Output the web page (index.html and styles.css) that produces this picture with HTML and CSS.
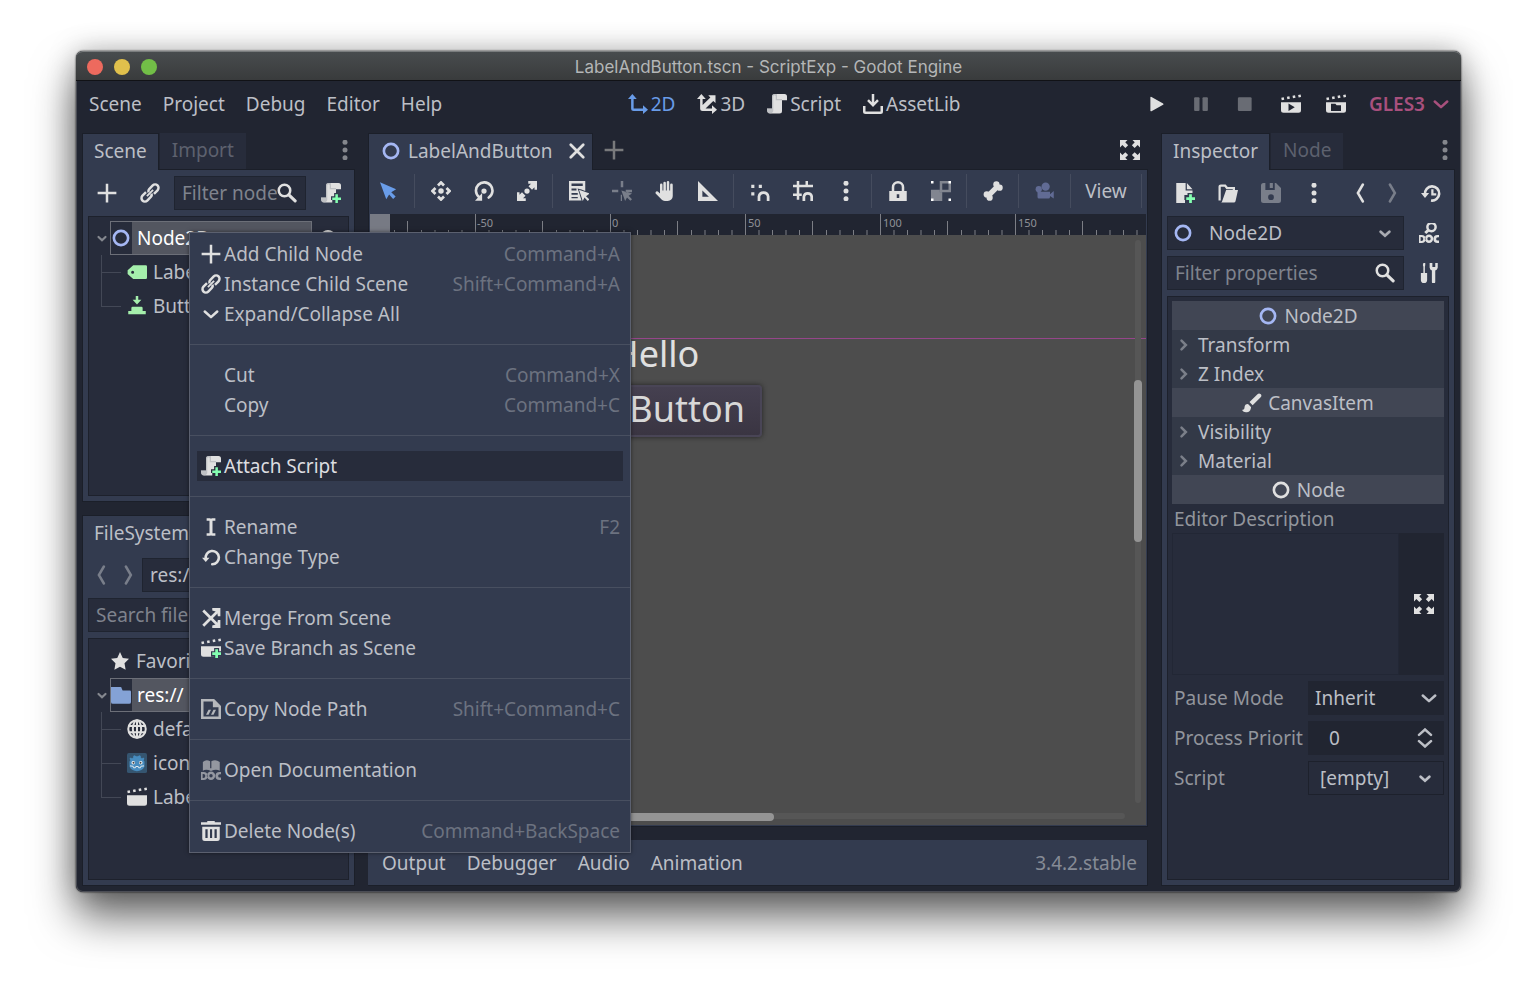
FILE: index.html
```html
<!DOCTYPE html>
<html lang="en">
<head>
    <meta charset="UTF-8">
    <meta name="viewport" content="width=device-width, initial-scale=1.0">
    <title>LabelAndButton.tscn - ScriptExp - Godot Engine</title>
    <link rel="stylesheet" href="styles.css">
</head>
<body>
    <!-- icon set, 16x16 grid -->
    <svg class="sprite" aria-hidden="true">
        <symbol id="i-add" viewBox="0 0 16 16"><path d="M7 .5V7H.5v2H7v6.500h2V9h6.500V7H9V.5z"/></symbol>
        <symbol id="i-link" viewBox="0 0 16 16"><g transform="rotate(-45 8 8)" fill="none" stroke="currentColor" stroke-width="2"><path d="M8.500 9.300a2.700 2.700 0 0 1-2.300 1.400H2.200a2.700 2.700 0 0 1 0-5.400h4"/><path d="M7.500 6.700a2.700 2.700 0 0 1 2.300-1.400h4a2.700 2.700 0 0 1 0 5.400h-4"/><path d="M4.500 8h7" stroke-width="1.500"/></g></symbol>
        <symbol id="i-search" viewBox="0 0 16 16"><g fill="none" stroke="currentColor"><circle cx="6" cy="6" r="4.600" stroke-width="2"/><path d="M9.500 9.500l5 4.800" stroke-width="2.500" stroke-linecap="round"/></g></symbol>
        <symbol id="i-script" viewBox="0 0 16 16"><path d="M6 0a2 2 0 0 0-2 2v9.500H0V13a2.500 2.500 0 0 0 2.500 2.500H10a2 2 0 0 0 2-2V5h4V2a2 2 0 0 0-2-2z"/><path d="M6 0a2 2 0 0 0-2 2v9.500H0V13a2.500 2.500 0 0 0 5 0V2a1 1 0 0 1 2 0v3h5V4H8V0z" fill="#a9abb0" opacity=".6"/></symbol>
        <symbol id="i-script-new" viewBox="0 0 16 16"><path d="M6 0a2 2 0 0 0-2 2v9.500H0V13a2.500 2.500 0 0 0 2.500 2.500H9V13.500H8v-3h2.500V8H12V5h4V2a2 2 0 0 0-2-2z"/><path d="M6 0a2 2 0 0 0-2 2v9.500H0V13a2.500 2.500 0 0 0 5 0V2a1 1 0 0 1 2 0v3h5V4H8V0z" fill="#a9abb0" opacity=".6"/><path fill="#84ffb1" d="M11.500 9h2v2.500H16v2h-2.500V16h-2v-2.500H9v-2h2.500z"/></symbol>
        <symbol id="i-dots" viewBox="0 0 16 16"><circle cx="8" cy="1.800" r="2"/><circle cx="8" cy="8" r="2"/><circle cx="8" cy="14.200" r="2"/></symbol>
        <symbol id="i-node" viewBox="0 0 16 16"><circle cx="8" cy="8" r="5.700" fill="none" stroke="currentColor" stroke-width="2.100"/></symbol>
        <symbol id="i-2d" viewBox="0 0 16 16"><path d="M3.500 0L0 4h2.500v7.500a2 2 0 0 0 2 2H12V16l4-3.500L12 9v2.500H4.500V4H7z"/></symbol>
        <symbol id="i-3d" viewBox="0 0 16 16"><path d="M3.500 0L0 4h2.500v7.500a2 2 0 0 0 2 2H12V16l4-3.500L12 9v2.500H6.800L13 5.500l1.800 1.700V1H9l1.700 1.700-6.200 6V4H7z"/></symbol>
        <symbol id="i-asset" viewBox="0 0 16 16"><path d="M7 0v6.500L4.700 4.200 3.300 5.600 8 10.300l4.700-4.700-1.400-1.400L9 6.500V0zM0 9.500V14a2 2 0 0 0 2 2h12a2 2 0 0 0 2-2V9.500h-2V14H2V9.500z"/></symbol>
        <symbol id="i-play" viewBox="0 0 16 16"><path d="M3.500 2.800v10.400a.6.6 0 0 0 .9.500l9.300-5.200a.6.6 0 0 0 0-1L4.400 2.300a.6.6 0 0 0-.9.500z"/></symbol>
        <symbol id="i-pause" viewBox="0 0 16 16"><rect x="2.500" y="2.500" width="4.300" height="11" rx=".8"/><rect x="9.200" y="2.500" width="4.300" height="11" rx=".8"/></symbol>
        <symbol id="i-stop" viewBox="0 0 16 16"><rect x="1.500" y="2.500" width="11" height="11" rx="1"/></symbol>
        <symbol id="i-clap" viewBox="0 0 16 16"><path d="M0 6.500h16V13a2 2 0 0 1-2 2H2a2 2 0 0 1-2-2zM.2 3l2-.4.4 2-2 .4zM4.700 2.200l2-.4.4 2-2 .4zM9.200 1.400l2-.4.4 2-2 .4zM13.700.8l2-.4.4 2-2 .4z"/></symbol>
        <symbol id="i-playscene" viewBox="0 0 16 16"><use href="#i-clap"/><path fill="#212531" d="M6 7.500v6l5-3z"/></symbol>
        <symbol id="i-playcustom" viewBox="0 0 16 16"><use href="#i-clap"/><path fill="#212531" d="M4 7.800h3.500l1 1.200H12v4.500H4z"/></symbol>
        <symbol id="i-savebranch" viewBox="0 0 16 16"><use href="#i-clap"/><path fill="#333b4f" d="M10.500 8h4v2.500H17v4.500h-2.500v2h-4v-2H8v-4.500h2.500z"/><path fill="#84ffb1" d="M11.400 9h2.200v2.400H16v2.200h-2.400V16h-2.200v-2.400H9v-2.200h2.400z"/></symbol>
        <symbol id="i-down" viewBox="0 0 16 16"><path d="M3 6l5 4.500L13 6" fill="none" stroke="currentColor" stroke-width="2" stroke-linecap="round" stroke-linejoin="round"/></symbol>
        <symbol id="i-arrow" viewBox="0 0 16 16"><path d="M4.500 7L8 10.200 11.500 7" fill="none" stroke="currentColor" stroke-width="2.200" stroke-linecap="round"/></symbol>
        <symbol id="i-right" viewBox="0 0 16 16"><path d="M6 4.500L9.500 8 6 11.500" fill="none" stroke="currentColor" stroke-width="2" stroke-linecap="round"/></symbol>
        <symbol id="i-back" viewBox="0 0 16 16"><path d="M9.500 1.200L5.500 8l4 6.800" fill="none" stroke="currentColor" stroke-width="2" stroke-linecap="round"/></symbol>
        <symbol id="i-fwd" viewBox="0 0 16 16"><path d="M5.500 1.200L9.500 8l-4 6.800" fill="none" stroke="currentColor" stroke-width="2" stroke-linecap="round"/></symbol>
        <symbol id="i-close" viewBox="0 0 16 16"><path d="M3 3l10 10M13 3L3 13" fill="none" stroke="currentColor" stroke-width="2.200" stroke-linecap="round"/></symbol>
        <symbol id="i-expand" viewBox="0 0 16 16"><path d="M0 0h6L4.200 1.800l2.300 2.300-2.200 2.200L1.900 4 0 6zM16 0v6l-1.900-2-2.400 2.300-2.200-2.200 2.300-2.300L10 0zM0 16v-6l1.900 2 2.400-2.300 2.200 2.200-2.300 2.300L6 16zM16 16h-6l1.800-1.800-2.300-2.300 2.200-2.200 2.400 2.300 1.900-2z"/></symbol>
        <symbol id="i-select" viewBox="0 0 16 16"><path d="M.8 1L5.800 14.500l2.300-3.700 3.200 3.500 2-2-3.500-3.400 3.900-2.400z"/></symbol>
        <symbol id="i-move" viewBox="0 0 16 16"><circle cx="8" cy="8" r="2.200"/><path d="M5.600 3.600L8 1.200l2.400 2.400M5.600 12.400L8 14.800l2.400-2.400M3.600 5.600L1.200 8l2.400 2.400M12.400 5.600L14.800 8l-2.400 2.400" fill="none" stroke="currentColor" stroke-width="2.200"/></symbol>
        <symbol id="i-rotate" viewBox="0 0 16 16"><circle cx="8" cy="8" r="2.100"/><path d="M11.800 13.200A6.600 6.600 0 1 0 4 12.800" fill="none" stroke="currentColor" stroke-width="2.100" stroke-linecap="round"/><path d="M6.500 9.500V15.700H.8z"/></symbol>
        <symbol id="i-scale" viewBox="0 0 16 16"><circle cx="8" cy="8" r="2.100"/><path d="M9 0h7v7h-2V5l-2 2-2.800-2.800 2-2H9zM7 16H0V9h2v2l2-2 2.800 2.800-2 2H7z"/></symbol>
        <symbol id="i-list" viewBox="0 0 16 16"><path fill-rule="evenodd" d="M0 0h13v8l-3-1.200L6.800 6 8 9l2 6.500H0zM2 2v2h9V2zM2 6v1.500h4V6zm0 3.500V11h5V9.500zM2 12.800v.9h5v-.9z"/><path d="M8 7l3 9 1.400-2.800L15 16l1.300-1.300-2.700-2.600L16.500 10z"/></symbol>
        <symbol id="i-pivot" viewBox="0 0 16 16"><path d="M7 0h2v5H7zM0 7h5v2H0zM11 7h5v2h-5zM7 11h1v5H7zM7.500 7.500l3 8.500 1.500-2.900 2.700 2.700 1.300-1.300-2.700-2.700L16 10z"/></symbol>
        <symbol id="i-hand" viewBox="0 0 16 16"><path d="M4 10V3a1 1 0 0 1 2 0v4.500h.7V1.500a1 1 0 0 1 2 0v6h.7V1a1 1 0 0 1 2 0v6.500h.7V3a1 1 0 0 1 2.100 0v9a4 4 0 0 1-4 4H8c-1.500 0-2.500-.8-3.500-2L.5 10a1.300 1.300 0 0 1 2-1.500z"/></symbol>
        <symbol id="i-ruler" viewBox="0 0 16 16"><path fill-rule="evenodd" d="M0 0v16h16zm3.500 7.500l5.200 5H3.500z"/></symbol>
        <symbol id="i-snap" viewBox="0 0 16 16"><path d="M1 3h2.500v2.500H1zM7 3h2.500v2.500H7zM1 9h2.500v2.500H1z"/><path d="M7.200 16v-3.700a3.700 3.700 0 0 1 7.300 0V16" fill="none" stroke="currentColor" stroke-width="2.200"/></symbol>
        <symbol id="i-gridsnap" viewBox="0 0 16 16"><path d="M3 0h2v3h5V0h2v3h4v2H5v5h2v2H5v3H3v-3H0v-2h3V5H0V3h3z"/><path d="M8.700 16v-3.500a3.200 3.200 0 0 1 6.300 0V16" fill="none" stroke="currentColor" stroke-width="2.200"/></symbol>
        <symbol id="i-lock" viewBox="0 0 16 16"><path fill-rule="evenodd" d="M8 0a5 5 0 0 0-5 5v3H1v8h14V8h-2V5a5 5 0 0 0-5-5zm0 2a3 3 0 0 1 3 3v3H5V5a3 3 0 0 1 3-3zM7 10.500h2v3H7z"/></symbol>
        <symbol id="i-group" viewBox="0 0 16 16"><path opacity=".45" d="M0 7h7v2h2v7H0z"/><path d="M8 1h7v7H8z" fill="none" stroke="currentColor" stroke-width="2" opacity=".45"/><path fill="#fff" d="M0 0h2v2H0zM14 0h2v2h-2zM0 14h2v2H0zM14 14h2v2h-2z"/></symbol>
        <symbol id="i-bone" viewBox="0 0 16 16"><path d="M4.500 11.500l7-7" stroke="currentColor" stroke-width="4.200"/><circle cx="3" cy="10.700" r="2.500"/><circle cx="5.300" cy="13.300" r="2.500"/><circle cx="10.700" cy="2.700" r="2.500"/><circle cx="13.300" cy="5.300" r="2.500"/></symbol>
        <symbol id="i-camera" viewBox="0 0 16 16"><circle cx="3" cy="6.500" r="2.500"/><circle cx="8.500" cy="4.500" r="3.300"/><path d="M2 8.500h10v2L15 8v6l-3-2v.8A1.200 1.200 0 0 1 10.800 14H3.200A1.200 1.200 0 0 1 2 12.800z"/></symbol>
        <symbol id="i-newfile" viewBox="0 0 16 16"><path d="M1 0v16h7v-2.500H7.500v-4H10V8h4V6H8.500V0zM9.500 0v5H14z"/><path fill="#84ffb1" d="M11.300 9h2.200v2.300H16v2.200h-2.500V16h-2.200v-2.500H9v-2.200h2.300z"/></symbol>
        <symbol id="i-open" viewBox="0 0 16 16"><path d="M1.300 14V3a1 1 0 0 1 1-1h3.400l1.500 2h5.500v2" fill="none" stroke="currentColor" stroke-width="1.800"/><path d="M6.500 5.500H16L14 14.500a1.500 1.500 0 0 1-1.300 1H2a1.200 1.200 0 0 0 1.300-1z"/></symbol>
        <symbol id="i-save" viewBox="0 0 16 16"><path fill-rule="evenodd" d="M2 0h10l4 4v10a2 2 0 0 1-2 2H2a2 2 0 0 1-2-2V2a2 2 0 0 1 2-2zm1.500 0v5.500H11V0zM8 9a2.300 2.300 0 1 0 0 4.600A2.300 2.300 0 0 0 8 9z"/><path d="M7 0h2.500v4H7z"/></symbol>
        <symbol id="i-history" viewBox="0 0 16 16"><path d="M3.200 9A5.700 5.700 0 1 1 8 14" fill="none" stroke="currentColor" stroke-width="2.100"/><path d="M0 8h6.500L3.200 12zM8.200 5h1.800v3.200h2.200V10h-4z"/></symbol>
        <symbol id="i-doc" viewBox="0 0 16 16"><path fill-rule="evenodd" d="M-.5 9.500H2a3.200 3.200 0 0 1 0 6.500H-.5zm1.800 1.700v3.100h.6a1.500 1.500 0 0 0 0-3.100zM8 9.200a3.300 3.300 0 1 1 0 6.700 3.300 3.300 0 0 1 0-6.700zm0 2a1.300 1.300 0 1 0 0 2.700 1.300 1.300 0 0 0 0-2.700zM16.300 9.500v1.900H15a1.300 1.300 0 0 0 0 2.600h1.300v2h-1.500a3.200 3.200 0 0 1 0-6.500z"/></symbol>
        <symbol id="i-finddoc" viewBox="0 0 16 16"><use href="#i-doc"/><circle cx="10" cy="3.200" r="3.300" fill="none" stroke="currentColor" stroke-width="2"/><path d="M7.700 5.500L5 8" stroke="currentColor" stroke-width="2.300"/></symbol>
        <symbol id="i-opendoc" viewBox="0 0 16 16"><use href="#i-doc"/><path d="M1.500 1.500Q4.200-1 7.300 1v5.500h1V1Q11.500-1 15 1.500V8.500Q12 7 8 8.700 4 7 1.500 8.500z"/></symbol>
        <symbol id="i-tools" viewBox="0 0 16 16"><path d="M3.500 0H5v1.500L4.700 3v5H6.500v5.500a2.500 2.500 0 0 1-5 0V8h2V3L3.100 1.500z"/><path d="M8.500 0v3.500a3 3 0 0 0 1.800 2.500V15a1.200 1.200 0 0 0 2.700 0V6a3 3 0 0 0 2-2.500V0h-2v3.200h-2.300V0z"/></symbol>
        <symbol id="i-brush" viewBox="0 0 16 16"><path d="M14.800.8a1.800 1.800 0 0 0-2.400.2L6 7.200l2.500 2.500 6.400-6.300a1.800 1.800 0 0 0-.1-2.600zM4.800 8.800A2.800 2.800 0 0 0 2 11.500C2 13 .8 13.500 0 13.500A3.800 3.800 0 0 0 7 12.500a2.300 2.300 0 0 0 .2-1.300z"/></symbol>
        <symbol id="i-tag" viewBox="0 0 16 16"><path fill-rule="evenodd" d="M5 2.500h10a1 1 0 0 1 1 1v9a1 1 0 0 1-1 1H5L.5 9.500v-3zM4.500 7a1.200 1.200 0 1 0 0 2.400 1.200 1.200 0 0 0 0-2.400z"/></symbol>
        <symbol id="i-press" viewBox="0 0 16 16"><path d="M7 0h2v3h2.500L8 6.800 4.500 3H7zM4.500 8.500h7a1 1 0 0 1 1 1V12h-9V9.500a1 1 0 0 1 1-1zM1 12h14v2.500H1z"/></symbol>
        <symbol id="i-ibeam" viewBox="0 0 16 16"><path d="M4.500 1h3l.5.500.5-.5h3v2H9.200v10h2.300v2h-3l-.5-.5-.5.500h-3v-2h2.300V3H4.500z"/></symbol>
        <symbol id="i-reload" viewBox="0 0 16 16"><path d="M3.800 9.500A5.300 5.300 0 1 1 9 13.800" fill="none" stroke="currentColor" stroke-width="2.100" stroke-linecap="round"/><path d="M.8 8.500h6L3.800 12z"/></symbol>
        <symbol id="i-merge" viewBox="0 0 16 16"><path d="M1.800 2l11 11M1.800 14.200l11-11" fill="none" stroke="currentColor" stroke-width="2.200"/><path d="M9 0h6.500v6.500h-2L13 4l-1.300-1.200L9 2zM9 16h6.500V9.500h-2L13 12l-1.300 1.200L9 14z"/></symbol>
        <symbol id="i-copypath" viewBox="0 0 16 16"><path fill-rule="evenodd" d="M0 0h10.500L16 5.500V16H0zm2 2v12h12V6.500H9.500V2zM6 8.500h2L6 12.500H4zM10 8.500h2l-2 4H8z"/></symbol>
        <symbol id="i-trash" viewBox="0 0 16 16"><path fill-rule="evenodd" d="M5 0h6v1h5v2H0V1h5zM1 4.500h14V14a2 2 0 0 1-2 2H3a2 2 0 0 1-2-2zm2.500 2v7h1.800v-7zm3.700 0v7h1.700v-7zm3.600 0v7h1.800v-7z"/></symbol>
        <symbol id="i-star" viewBox="0 0 16 16"><path d="M8 .8l2.200 4.700 5 .7-3.600 3.600.9 5.200L8 12.500 3.500 15l.9-5.200L.8 6.200l5-.7z"/></symbol>
        <symbol id="i-folder" viewBox="0 0 16 16"><path d="M0 1.500h7.500q1 0 1 1l.8 1.800H15q1 0 1 1v8.200q0 1.500-1.500 1.500h-13Q0 15 0 13.500z"/></symbol>
        <symbol id="i-globe" viewBox="0 0 16 16"><g fill="none" stroke="currentColor" stroke-width="1.600"><circle cx="8" cy="8" r="7"/><ellipse cx="8" cy="8" rx="3.300" ry="7"/><path d="M8 1v14M1.500 5.500h13M1.500 10.500h13"/></g></symbol>
        <symbol id="i-godot" viewBox="0 0 16 16"><rect width="16" height="16" rx="1.500" fill="#355570"/><path fill="#478cbf" d="M6 1.800l1.300.8h1.400l1.300-.8 1 .5v1.300l1 .7 1-.7.900.9-.7 1.200.8 1V11q-2 3.500-6 3.500T2 11V6.700l.8-1L2 4.500l1-.9 1 .7 1-.7V2.300z"/><path fill="none" stroke="#dfe9f0" stroke-width=".8" d="M2.400 10.300l2.500.3.300 1.200h1.500l.3-1h2l.3 1h1.500l.3-1.200 2.500-.3"/><circle cx="5" cy="7.800" r="1.400" fill="#fff"/><circle cx="11" cy="7.800" r="1.400" fill="#fff"/><circle cx="5.200" cy="7.800" r=".8" fill="#414042"/><circle cx="10.800" cy="7.800" r=".8" fill="#414042"/></symbol>
        <symbol id="i-spin" viewBox="0 0 16 16"><path d="M3.200 5.500L8 1.200l4.800 4.300M3.200 10.500L8 14.800l4.800-4.300" fill="none" stroke="currentColor" stroke-width="2" stroke-linecap="round"/></symbol>
        <symbol id="i-eye" viewBox="0 0 16 16"><path d="M1 8q3-5.500 7-5.500T15 8q-3 5.500-7 5.500T1 8z" fill="none" stroke="currentColor" stroke-width="2"/><circle cx="8" cy="8" r="2"/></symbol>
    </svg>

    <div class="window">
        <header class="titlebar">
            <div class="lights"><span class="light red"></span><span class="light yellow"></span><span class="light green"></span></div>
            <h1 class="title">LabelAndButton.tscn - ScriptExp - Godot Engine</h1>
        </header>

        <nav class="menubar">
            <div class="menus">
                <button>Scene</button>
                <button>Project</button>
                <button>Debug</button>
                <button>Editor</button>
                <button>Help</button>
            </div>
            <div class="modes">
                <button class="active"><svg class="icon"><use href="#i-2d"/></svg>2D</button>
                <button><svg class="icon"><use href="#i-3d"/></svg>3D</button>
                <button><svg class="icon"><use href="#i-script"/></svg>Script</button>
                <button><svg class="icon"><use href="#i-asset"/></svg>AssetLib</button>
            </div>
            <div class="run">
                <button aria-label="Play"><svg class="icon"><use href="#i-play"/></svg></button>
                <button class="off" aria-label="Pause"><svg class="icon"><use href="#i-pause"/></svg></button>
                <button class="off" aria-label="Stop"><svg class="icon"><use href="#i-stop"/></svg></button>
                <button aria-label="Play scene"><svg class="icon"><use href="#i-playscene"/></svg></button>
                <button aria-label="Play custom scene"><svg class="icon"><use href="#i-playcustom"/></svg></button>
                <button class="driver">GLES3<svg class="icon"><use href="#i-down"/></svg></button>
            </div>
        </nav>

        <main class="workspace">
            <div class="column">
                <section class="dock scene-dock">
                    <div class="tabs">
                        <button class="tab current">Scene</button>
                        <button class="tab">Import</button>
                        <button class="tab-menu" aria-label="Dock options"><svg class="icon"><use href="#i-dots"/></svg></button>
                    </div>
                    <div class="panel">
                        <div class="row scene-tools">
                            <button aria-label="Add node"><svg class="icon"><use href="#i-add"/></svg></button>
                            <button aria-label="Instance scene"><svg class="icon"><use href="#i-link"/></svg></button>
                            <label class="field"><input type="text" placeholder="Filter nodes" aria-label="Filter nodes"><svg class="icon"><use href="#i-search"/></svg></label>
                            <button aria-label="Attach script"><svg class="icon"><use href="#i-script-new"/></svg></button>
                        </div>
                        <div class="tree scene-tree">
                            <div class="item root">
                                <svg class="icon fold"><use href="#i-arrow"/></svg>
                                <div class="pick"><span class="pick-icon"><svg class="icon node2d"><use href="#i-node"/></svg></span><span class="name">Node2D</span></div>
                                <svg class="icon eye"><use href="#i-eye"/></svg>
                            </div>
                            <div class="item child"><span class="branch"></span><svg class="icon control"><use href="#i-tag"/></svg>Label</div>
                            <div class="item child"><span class="branch last"></span><svg class="icon control"><use href="#i-press"/></svg>Button</div>
                        </div>
                    </div>
                </section>

                <section class="dock files-dock">
                    <div class="tabs"><button class="tab current">FileSystem</button></div>
                    <div class="panel">
                        <div class="row path-row">
                            <button class="off" aria-label="Back"><svg class="icon"><use href="#i-back"/></svg></button>
                            <button class="off" aria-label="Forward"><svg class="icon"><use href="#i-fwd"/></svg></button>
                            <label class="field"><input type="text" value="res://" aria-label="Path"></label>
                        </div>
                        <label class="field"><input type="text" placeholder="Search files" aria-label="Search files"></label>
                        <div class="tree files-tree">
                            <div class="item favorites"><svg class="icon"><use href="#i-star"/></svg>Favorites:</div>
                            <div class="item root">
                                <svg class="icon fold"><use href="#i-arrow"/></svg>
                                <div class="pick wide"><span class="pick-icon"><svg class="icon folder"><use href="#i-folder"/></svg></span><span class="name">res://</span></div>
                            </div>
                            <div class="item child"><span class="branch"></span><svg class="icon"><use href="#i-globe"/></svg>default_env.tres</div>
                            <div class="item child"><span class="branch"></span><svg class="icon"><use href="#i-godot"/></svg>icon.png</div>
                            <div class="item child"><span class="branch last"></span><svg class="icon"><use href="#i-clap"/></svg>Label.tscn</div>
                        </div>
                    </div>
                </section>
            </div>

            <div class="column">
                <section class="dock editor">
                    <div class="tabs">
                        <button class="tab current scene-tab"><svg class="icon node2d"><use href="#i-node"/></svg>LabelAndButton<svg class="icon close"><use href="#i-close"/></svg></button>
                        <button class="new-tab" aria-label="New scene"><svg class="icon"><use href="#i-add"/></svg></button>
                        <button class="tab-menu full" aria-label="Distraction free"><svg class="icon"><use href="#i-expand"/></svg></button>
                    </div>
                    <div class="panel canvas-panel">
                        <div class="toolbar">
                            <button class="active" aria-label="Select"><svg class="icon"><use href="#i-select"/></svg></button>
                            <span class="sep"></span>
                            <button aria-label="Move"><svg class="icon"><use href="#i-move"/></svg></button>
                            <button aria-label="Rotate"><svg class="icon"><use href="#i-rotate"/></svg></button>
                            <button aria-label="Scale"><svg class="icon"><use href="#i-scale"/></svg></button>
                            <span class="sep"></span>
                            <button aria-label="List select"><svg class="icon"><use href="#i-list"/></svg></button>
                            <button class="off" aria-label="Pivot"><svg class="icon"><use href="#i-pivot"/></svg></button>
                            <button aria-label="Pan"><svg class="icon"><use href="#i-hand"/></svg></button>
                            <button aria-label="Ruler"><svg class="icon"><use href="#i-ruler"/></svg></button>
                            <span class="sep"></span>
                            <button aria-label="Smart snap"><svg class="icon"><use href="#i-snap"/></svg></button>
                            <button aria-label="Grid snap"><svg class="icon"><use href="#i-gridsnap"/></svg></button>
                            <button aria-label="Snap options"><svg class="icon"><use href="#i-dots"/></svg></button>
                            <span class="sep"></span>
                            <button aria-label="Lock"><svg class="icon"><use href="#i-lock"/></svg></button>
                            <button aria-label="Group"><svg class="icon"><use href="#i-group"/></svg></button>
                            <span class="sep"></span>
                            <button aria-label="Skeleton"><svg class="icon"><use href="#i-bone"/></svg></button>
                            <span class="sep"></span>
                            <button class="camera" aria-label="Camera override"><svg class="icon"><use href="#i-camera"/></svg></button>
                            <span class="sep"></span>
                            <button class="view">View</button>
                            <span class="sep"></span>
                        </div>
                        <svg class="ruler">
                            <defs>
                                <pattern id="ticks" x="105" width="135" height="21" patternUnits="userSpaceOnUse">
                                    <path d="M.5 0v21M67.500 7v14M14 16v5M27.500 16v5M41 16v5M54.500 16v5M81.500 16v5M95 16v5M108.500 16v5M122 16v5" stroke="#7c7e85"/>
                                </pattern>
                            </defs>
                            <rect width="100%" height="21" fill="url(#ticks)"/>
                            <rect width="20" height="21" fill="#777a84"/>
                            <text x="107" y="13">-50</text>
                            <text x="242" y="13">0</text>
                            <text x="378" y="13">50</text>
                            <text x="513" y="13">100</text>
                            <text x="648" y="13">150</text>
                        </svg>
                        <div class="canvas">
                            <div class="axis"></div>
                            <span class="game-label">Hello</span>
                            <button class="game-button">Button</button>
                            <div class="vscroll"><span></span></div>
                            <div class="hscroll"><span></span></div>
                        </div>
                    </div>
                </section>
                <div class="bottom-bar">
                    <button>Output</button>
                    <button>Debugger</button>
                    <button>Audio</button>
                    <button>Animation</button>
                    <span class="version">3.4.2.stable</span>
                </div>
            </div>

            <div class="column">
                <section class="dock inspector">
                    <div class="tabs">
                        <button class="tab current">Inspector</button>
                        <button class="tab">Node</button>
                        <button class="tab-menu" aria-label="Dock options"><svg class="icon"><use href="#i-dots"/></svg></button>
                    </div>
                    <div class="panel">
                        <div class="row inspector-tools">
                            <button aria-label="New resource"><svg class="icon"><use href="#i-newfile"/></svg></button>
                            <button aria-label="Load"><svg class="icon"><use href="#i-open"/></svg></button>
                            <button class="off" aria-label="Save"><svg class="icon"><use href="#i-save"/></svg></button>
                            <button aria-label="More"><svg class="icon"><use href="#i-dots"/></svg></button>
                            <button class="narrow push" aria-label="Previous"><svg class="icon"><use href="#i-back"/></svg></button>
                            <button class="narrow off" aria-label="Next"><svg class="icon"><use href="#i-fwd"/></svg></button>
                            <button aria-label="History"><svg class="icon"><use href="#i-history"/></svg></button>
                        </div>
                        <div class="row pair">
                            <button class="field object"><svg class="icon node2d"><use href="#i-node"/></svg><span>Node2D</span><svg class="icon"><use href="#i-arrow"/></svg></button>
                            <button aria-label="Open documentation"><svg class="icon"><use href="#i-finddoc"/></svg></button>
                        </div>
                        <div class="row pair">
                            <label class="field"><input type="text" placeholder="Filter properties" aria-label="Filter properties"><svg class="icon"><use href="#i-search"/></svg></label>
                            <button aria-label="Manage properties"><svg class="icon"><use href="#i-tools"/></svg></button>
                        </div>
                        <div class="tree properties">
                            <div class="category"><svg class="icon node2d"><use href="#i-node"/></svg>Node2D</div>
                            <button class="group"><svg class="icon"><use href="#i-right"/></svg>Transform</button>
                            <button class="group"><svg class="icon"><use href="#i-right"/></svg>Z Index</button>
                            <div class="category"><svg class="icon"><use href="#i-brush"/></svg>CanvasItem</div>
                            <button class="group"><svg class="icon"><use href="#i-right"/></svg>Visibility</button>
                            <button class="group"><svg class="icon"><use href="#i-right"/></svg>Material</button>
                            <div class="category"><svg class="icon"><use href="#i-node"/></svg>Node</div>
                            <label class="prop-title" for="description">Editor Description</label>
                            <div class="description">
                                <textarea id="description"></textarea>
                                <button aria-label="Expand editor"><svg class="icon"><use href="#i-expand"/></svg></button>
                            </div>
                            <div class="prop">
                                <label for="pause">Pause Mode</label>
                                <div class="value"><select id="pause"><option>Inherit</option><option>Stop</option><option>Process</option></select><svg class="icon"><use href="#i-down"/></svg></div>
                            </div>
                            <div class="prop">
                                <label for="priority">Process Priorit</label>
                                <div class="value number"><input id="priority" type="number" value="0"><svg class="icon"><use href="#i-spin"/></svg></div>
                            </div>
                            <div class="prop">
                                <label for="script">Script</label>
                                <div class="value resource"><select id="script"><option>[empty]</option></select><svg class="icon"><use href="#i-arrow"/></svg></div>
                            </div>
                        </div>
                    </div>
                </section>
            </div>
        </main>

        <!-- node context menu -->
        <div class="popup">
            <button><svg class="icon"><use href="#i-add"/></svg>Add Child Node<kbd>Command+A</kbd></button>
            <button><svg class="icon"><use href="#i-link"/></svg>Instance Child Scene<kbd>Shift+Command+A</kbd></button>
            <button><svg class="icon"><use href="#i-down"/></svg>Expand/Collapse All</button>
            <hr>
            <button><span class="icon"></span>Cut<kbd>Command+X</kbd></button>
            <button><span class="icon"></span>Copy<kbd>Command+C</kbd></button>
            <hr>
            <button class="hover"><svg class="icon"><use href="#i-script-new"/></svg>Attach Script</button>
            <hr>
            <button><svg class="icon"><use href="#i-ibeam"/></svg>Rename<kbd>F2</kbd></button>
            <button><svg class="icon"><use href="#i-reload"/></svg>Change Type</button>
            <hr>
            <button><svg class="icon"><use href="#i-merge"/></svg>Merge From Scene</button>
            <button><svg class="icon"><use href="#i-savebranch"/></svg>Save Branch as Scene</button>
            <hr>
            <button><svg class="icon dim"><use href="#i-copypath"/></svg>Copy Node Path<kbd>Shift+Command+C</kbd></button>
            <hr>
            <button><svg class="icon dimmer"><use href="#i-opendoc"/></svg>Open Documentation</button>
            <hr>
            <button><svg class="icon"><use href="#i-trash"/></svg>Delete Node(s)<kbd>Command+BackSpace</kbd></button>
        </div>
    </div>
</body>
</html>
```
FILE: styles.css
```css
* {
    box-sizing: border-box;
}

body {
    margin: 0;
    padding: 51px 75px 100px 76px;
    height: 100vh;
    min-height: 900px;
    background: #fff;
    color: #bcbfc6;
    font-family: "Noto Sans", sans-serif;
    font-size: 19px;
    line-height: 28px;
    overflow: hidden;
}

button, input, select, textarea {
    font: inherit;
    color: inherit;
    background: none;
    border: 0;
    padding: 0;
    margin: 0;
    border-radius: 0;
    outline: none;
    appearance: none;
}

button {
    display: flex;
    align-items: center;
    justify-content: center;
    white-space: nowrap;
}

.sprite {
    position: absolute;
    width: 0;
    height: 0;
}

.icon {
    flex: none;
    width: 20px;
    height: 20px;
    fill: currentColor;
    color: #e0e0e0;
    overflow: visible;
}

.node2d { color: #a5b7f3; }
.control { color: #a5efac; }
.folder { color: #84a2d6; }
.off .icon { color: #797e8a; }
.active { color: #699ce8; }
.active .icon { color: #699ce8; }
.dim { color: #b5b7bb; }
.dimmer { color: #9497a0; }

/* window */

.window {
    position: relative;
    display: flex;
    flex-direction: column;
    height: 100%;
    padding-bottom: 6px;
    background: #212531;
    border-radius: 7px;
    box-shadow: inset 0 0 0 1px #4b4d55, 0 0 2px #000, 0 25px 44px rgba(0, 0, 0, .6), 0 0 28px rgba(0, 0, 0, .25);
}

.titlebar {
    display: flex;
    align-items: center;
    height: 30px;
    padding: 1px 11px 0;
    border-radius: 7px 7px 0 0;
    border-top: 1px solid #7a7d7e;
    border-bottom: 1px solid #111216;
    background: linear-gradient(#484c4e, #393b3c);
}

.lights {
    display: flex;
    gap: 11px;
    flex: 1;
}

.light {
    width: 16px;
    height: 16px;
    border-radius: 50%;
}

.red { background: #ed6a5e; }
.yellow { background: #e0c04c; }
.green { background: #72be47; }

.title {
    margin: 0;
    color: #b4b6b7;
    font-family: Inter, sans-serif;
    font-size: 17px;
    font-weight: 400;
}

.titlebar::after {
    content: "";
    flex: 1;
}

.menubar {
    display: flex;
    justify-content: space-between;
    align-items: center;
    height: 52px;
    padding: 0 10px 6px 13px;
}

.menus {
    display: flex;
    gap: 21px;
}

.modes {
    display: flex;
    gap: 22px;
}

.modes button {
    gap: 3px;
}

.run {
    display: flex;
    gap: 25px;
}

.run .off .icon {
    color: #696c74;
}

.run .driver {
    gap: 6px;
    margin-left: -2px;
    color: #a8507d;
    font-weight: 600;
}

.driver .icon {
    color: #a8507d;
}

.workspace {
    flex: 1;
    min-height: 0;
    display: grid;
    grid-template-columns: 273px minmax(0, 1fr) 294px;
    gap: 13px;
    padding: 0 6px;
}

.column {
    display: flex;
    flex-direction: column;
    gap: 13px;
    min-height: 0;
    min-width: 0;
}

/* docks */

.dock {
    flex: 1;
    display: flex;
    flex-direction: column;
    min-height: 0;
}

.scene-dock {
    flex: none;
    height: 369px;
}

.tabs {
    display: flex;
    flex: none;
    height: 36px;
    gap: 1px;
}

.tabs button {
    padding-bottom: 2px;
}

.tabs .tab {
    padding: 0 12px 2px;
    background: #272c3b;
    color: #5d616e;
}

.tabs .current {
    padding: 0 11px 3px;
    margin-bottom: -1px;
    background: #333b4f;
    border: 1px solid #1b1f29;
    border-bottom: 0;
    color: #bcbfc6;
    z-index: 1;
}

.tab-menu {
    margin-left: auto;
}

.tab-menu .icon {
    color: #85878d;
}

.tabs .full {
    padding-right: 8px;
}

.full .icon {
    color: #e0e0e0;
}

.tabs .scene-tab {
    gap: 7px;
    padding-left: 12px;
}

.scene-tab .close {
    margin-left: 7px;
    margin-right: -6px;
}

.new-tab {
    margin-left: 10px;
}

.new-tab .icon {
    color: #797a7c;
}

.panel {
    flex: 1;
    min-height: 0;
    display: flex;
    flex-direction: column;
    gap: 6px;
    padding: 6px 5px 5px;
    background: #333b4f;
    border: 1px solid #1b1f29;
}

.row {
    display: flex;
    align-items: center;
    height: 34px;
    flex: none;
}

.row > button:not(.field) {
    width: 43px;
    flex: none;
}

.scene-tools {
    margin: 0 -3px;
}

.scene-tools .field {
    margin: 0 3px;
}

.field {
    display: flex;
    flex: 1;
    align-items: center;
    min-width: 0;
    height: 34px;
    padding: 0 8px 0 7px;
    background: #272c3b;
    border: 1px solid #1f2430;
}

.panel > .field {
    flex: none;
}

.field input {
    flex: 1;
    min-width: 0;
    width: 100%;
}

::placeholder {
    color: #7f838d;
    opacity: 1;
}

.tree {
    flex: 1;
    min-height: 0;
    padding: 4px;
    background: #272c3b;
    border: 1px solid #1d212c;
    overflow: hidden;
}

.scene-tree {
    padding-left: 5px;
}

.files-tree {
    padding: 5px;
}

.item {
    display: flex;
    align-items: center;
    height: 34px;
    white-space: nowrap;
}

.fold {
    width: 16px;
    color: #85888f;
}

.pick {
    display: flex;
    align-items: center;
    width: 202px;
    height: 34px;
    background: #535660;
    border: 1px solid #6c6f78;
    color: #fff;
}

.pick.wide {
    width: 234px;
}

.pick-icon {
    display: flex;
    align-items: center;
    height: 32px;
    padding-right: 1px;
    margin-right: 5px;
    background: #272c3b;
}

.eye {
    margin-left: 6px;
}

.favorites {
    padding-left: 16px;
    gap: 6px;
}

.child {
    padding-left: 7px;
    gap: 6px;
}

/* connector lines of the tree */
.branch {
    width: 20px;
    height: 34px;
    background:
        linear-gradient(#434856, #434856) left top / 1px 100% no-repeat,
        linear-gradient(#434856, #434856) left center / 24px 1px no-repeat;
}

.branch.last {
    background:
        linear-gradient(#434856, #434856) left top / 1px 50% no-repeat,
        linear-gradient(#434856, #434856) left center / 24px 1px no-repeat;
}

.path-row > button.off:not(.field) {
    width: 27px;
}

/* 2D editor */

.canvas-panel {
    padding: 0 1px 1px;
    gap: 0;
}

.toolbar {
    display: flex;
    align-items: center;
    height: 44px;
    padding-bottom: 2px;
    flex: none;
    margin-left: -3px;
}

.toolbar button {
    width: 43px;
    height: 34px;
    flex: none;
}

.toolbar .sep {
    width: 1px;
    height: 34px;
    margin: 0 4px;
    background: #454c5e;
}

.toolbar .view {
    width: 62px;
}

.camera .icon {
    color: #616b94;
}

.ruler {
    display: block;
    flex: none;
    width: 100%;
    height: 21px;
    background: #212531;
    font-size: 11px;
    fill: #8f9197;
}

.canvas {
    position: relative;
    flex: 1;
    background: #4d4d4d;
    overflow: hidden;
}

.axis {
    position: absolute;
    left: 240px;
    right: 0;
    top: 103px;
    height: 1px;
    background: #95468a;
}

.game-label {
    position: absolute;
    left: 242px;
    top: 97px;
    color: #e0e0e0;
    font-size: 36px;
    line-height: 44px;
}

.game-button {
    position: absolute;
    left: 242px;
    top: 150px;
    width: 150px;
    height: 52px;
    justify-content: flex-end;
    padding: 0 15px 4px 0;
    border: 2px solid #494556;
    border-radius: 4px;
    background: linear-gradient(#454050, #3a3542);
    box-shadow: 0 0 5px #222;
    color: #d8d8d8;
    font-size: 36px;
}

.vscroll {
    position: absolute;
    right: 5px;
    top: 5px;
    bottom: 22px;
    width: 6px;
    border-radius: 3px;
    background: #565656;
}

.vscroll span {
    display: block;
    margin: 140px -1px 0;
    height: 162px;
    border-radius: 4px;
    background: #949494;
}

.hscroll {
    position: absolute;
    left: 25px;
    right: 21px;
    bottom: 6px;
    height: 6px;
    border-radius: 3px;
    background: #565656;
}

.hscroll span {
    display: block;
    margin-left: 140px;
    width: 239px;
    height: 8px;
    border-radius: 4px;
    background: #949494;
}

.bottom-bar {
    display: flex;
    align-items: center;
    gap: 21px;
    flex: none;
    height: 46px;
    padding: 0 10px 0 14px;
    background: #333b4f;
    border: 1px solid #1b1f29;
    border-width: 0 1px 1px 0;
}

.version {
    margin-left: auto;
    color: #868b96;
}

/* inspector */

.inspector-tools {
    margin: 0 -3px 0 -4px;
}

.row > button.narrow:not(.field) {
    width: 32px;
}

.row > button.narrow.push {
    margin-left: auto;
}

.pair {
    gap: 3px;
    margin-right: -1px;
}

.field.object {
    padding-left: 5px;
}

.field.object span {
    flex: 1;
    text-align: left;
    margin-left: 16px;
}

.object .icon:last-child {
    color: #a9abb2;
}

.properties {
    display: flex;
    flex-direction: column;
}

.category, .group, .prop-title {
    display: flex;
    align-items: center;
    flex: none;
    height: 29px;
}

.category {
    justify-content: center;
    gap: 6px;
    background: #414654;
}

.group {
    justify-content: flex-start;
    gap: 4px;
    padding-left: 2px;
    background: #333947;
}

.group .icon {
    color: #7b7f89;
}

.prop-title, .prop label {
    color: #92959c;
    padding-left: 2px;
}

.description {
    display: flex;
    flex: none;
    height: 142px;
    margin-bottom: 6px;
    background: #212531;
}

.description textarea {
    flex: 1;
    min-width: 0;
    background: #272c3b;
    border: 1px solid #222735;
    resize: none;
}

.description button {
    width: 45px;
    padding-left: 5px;
}

.prop {
    display: grid;
    grid-template-columns: minmax(0, 1fr) minmax(0, 1fr);
    align-items: center;
    flex: none;
    height: 34px;
    margin-bottom: 6px;
}

.prop label {
    white-space: nowrap;
}

.value {
    display: flex;
    align-items: center;
    height: 34px;
    background: #212531;
}

.value select, .value input {
    flex: 1;
    min-width: 0;
    height: 32px;
    padding-left: 7px;
}

.value input {
    padding-left: 21px;
    appearance: textfield;
}

.value .icon {
    margin: 0 5px 0 -25px;
    color: #bcbfc6;
    pointer-events: none;
}

.value.number .icon {
    margin: 0 9px 0 -29px;
}

.value.resource {
    background: #272c3b;
    border: 1px solid #1d212c;
}

.value.resource .icon {
    margin: 0 8px 0 -28px;
}

.value.resource select {
    padding-left: 11px;
}

/* context menu */

.popup {
    position: absolute;
    left: 113px;
    top: 181px;
    z-index: 5;
    width: 442px;
    padding: 6px 7px;
    background: #333b4f;
    border: 1px solid #5b606f;
    box-shadow: 0 0 4px rgba(0, 0, 0, .5);
}

.popup button {
    justify-content: flex-start;
    gap: 3px;
    width: 100%;
    height: 30px;
    padding: 0 3px 0 4px;
}

.popup .hover {
    background: #272c3b;
    color: #dcdde0;
}

.popup kbd {
    margin-left: auto;
    color: #6c7280;
    font: inherit;
}

.popup hr {
    height: 1px;
    margin: 15px -7px;
    border: 0;
    background: #484f60;
}
```
